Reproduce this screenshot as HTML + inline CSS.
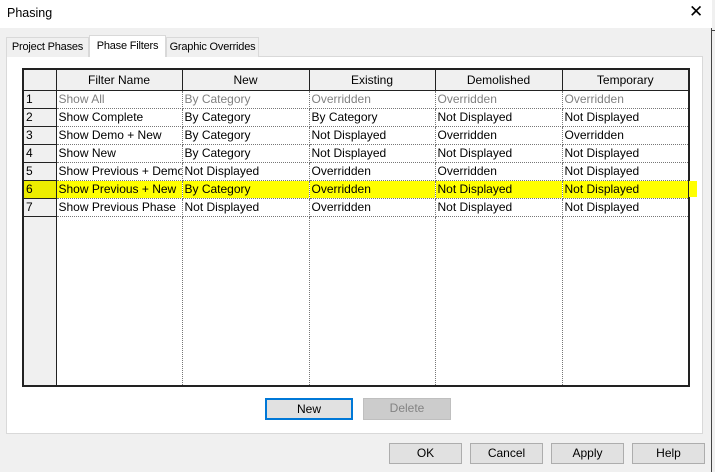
<!DOCTYPE html>
<html><head><meta charset="utf-8"><style>
*{margin:0;padding:0;box-sizing:border-box}
body{width:715px;height:472px;background:#f0f0f0;position:relative;overflow:hidden;font-family:"Liberation Sans",sans-serif;font-size:12px;color:#000}
.a{position:absolute}
.title{left:0;top:0;width:712px;height:28px;background:#fff}
.tab{position:absolute;height:20px;border:1px solid #d9d9d9;border-bottom:none;background:#f0f0f0;text-align:center;line-height:19px;font-size:11px;white-space:nowrap;letter-spacing:-0.2px}
.panel{left:6px;top:56px;width:697px;height:378px;background:#fff;border:1px solid #d9d9d9}
table{position:absolute;left:22px;top:68px;border-collapse:collapse;border:2px solid #222}
td{height:18px;border:1px dotted #777;padding:0 2px;white-space:nowrap;overflow:hidden;line-height:16px;font-size:12px}
th{height:21px;border:1px solid #222;background:#f0f0f0;font-weight:normal;font-size:12px}
td.n{background:#f0f0f0;border:1px solid #222;border-left:none}
tr.g td{color:#808080}
tr.y td{background:#ffff00}
.btn{position:absolute;height:21px;border:1px solid #adadad;background:#e1e1e1;text-align:center;line-height:19px;font-size:12px}
</style></head><body>
<div class="a title"><span class="a" style="left:7px;top:6px;font-size:12.5px">Phasing</span><span class="a" style="left:689px;top:2px;font-size:17px">✕</span></div>
<div class="a" style="left:711px;top:28px;width:1px;height:444px;background:#444"></div>
<div class="a" style="left:711px;top:30px;width:4px;height:1px;background:#444"></div>
<div class="a panel"></div>
<div class="tab" style="left:6px;top:37px;width:83px">Project Phases</div>
<div class="tab" style="left:89px;top:35px;width:77px;height:22px;background:#fff;line-height:20px">Phase Filters</div>
<div class="tab" style="left:166px;top:37px;width:93px">Graphic Overrides</div>
<table>
<tr><th style="width:33px"></th><th style="width:126px">Filter Name</th><th style="width:127px">New</th><th style="width:126px">Existing</th><th style="width:127px">Demolished</th><th style="width:127px">Temporary</th></tr>
<tr class="g"><td class="n" style="color:#000">1</td><td>Show All</td><td>By Category</td><td>Overridden</td><td>Overridden</td><td>Overridden</td></tr>
<tr><td class="n">2</td><td>Show Complete</td><td>By Category</td><td>By Category</td><td>Not Displayed</td><td>Not Displayed</td></tr>
<tr><td class="n">3</td><td>Show Demo + New</td><td>By Category</td><td>Not Displayed</td><td>Overridden</td><td>Overridden</td></tr>
<tr><td class="n">4</td><td>Show New</td><td>By Category</td><td>Not Displayed</td><td>Not Displayed</td><td>Not Displayed</td></tr>
<tr><td class="n">5</td><td style="max-width:126px">Show Previous + Demo</td><td>Not Displayed</td><td>Overridden</td><td>Overridden</td><td>Not Displayed</td></tr>
<tr class="y"><td class="n" style="background:#eded00">6</td><td>Show Previous + New</td><td>By Category</td><td>Overridden</td><td>Not Displayed</td><td>Not Displayed</td></tr>
<tr><td class="n">7</td><td>Show Previous Phase</td><td>Not Displayed</td><td>Overridden</td><td>Not Displayed</td><td>Not Displayed</td></tr>
<tr><td class="n" style="height:170px;border-bottom:none"></td><td></td><td></td><td></td><td></td><td></td></tr>
</table>
<div class="a" style="left:689px;top:181px;width:8px;height:16px;background:#ffff00"></div>
<div class="btn" style="left:265px;top:398px;width:88px;height:22px;border:2px solid #0078d7;line-height:18px">New</div>
<div class="btn" style="left:363px;top:398px;width:88px;height:22px;background:#cccccc;border-color:#bfbfbf;color:#838383">Delete</div>
<div class="btn" style="left:389px;top:443px;width:73px">OK</div>
<div class="btn" style="left:470px;top:443px;width:73px">Cancel</div>
<div class="btn" style="left:551px;top:443px;width:73px">Apply</div>
<div class="btn" style="left:632px;top:443px;width:73px">Help</div>
</body></html>
